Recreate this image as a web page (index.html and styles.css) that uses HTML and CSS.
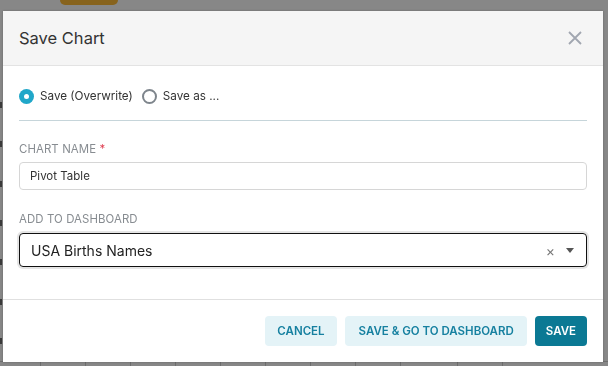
FILE: index.html
```html
<!DOCTYPE html>
<html>
<head>
<meta charset="utf-8">
<link rel="stylesheet" href="styles.css">
</head>
<body>
<div class="page">
  <div class="page-top">
    <span class="pill"></span>
  </div>
  <div class="page-rows">
    <div class="mark"></div><div class="mark"></div><div class="mark"></div><div class="mark"></div><div class="mark"></div><div class="mark"></div><div class="mark"></div>
  </div>
  <div class="page-table">
    <div class="cell c1"></div><div class="cell"></div><div class="cell"></div><div class="cell"></div><div class="cell"></div><div class="cell"></div><div class="cell"></div><div class="cell"></div><div class="cell"></div><div class="cell wide"></div><div class="cell"></div><div class="cell last"></div>
  </div>
</div>

<div class="modal">
  <div class="modal-header">
    <span class="modal-title">Save Chart</span>
    <svg class="close" width="14" height="14" viewBox="0 0 14 14"><path d="M1 1L13 13M13 1L1 13" stroke="#a1a6b0" stroke-width="1.8" fill="none"/></svg>
  </div>
  <div class="modal-body">
    <div class="radios">
      <label class="radio"><span class="dot checked"></span><span>Save (Overwrite)</span></label>
      <label class="radio"><span class="dot"></span><span>Save as ...</span></label>
    </div>
    <div class="divider"></div>
    <div class="field-label">CHART NAME <span class="req">*</span></div>
    <div class="input">Pivot Table</div>
    <div class="field-label second">ADD TO DASHBOARD</div>
    <div class="select">
      <span class="select-value">USA Births Names</span>
      <span class="clear">×</span>
      <span class="caret"></span>
    </div>
  </div>
  <div class="modal-footer">
    <button class="btn light">CANCEL</button>
    <button class="btn light wide">SAVE &amp; GO TO DASHBOARD</button>
    <button class="btn primary">SAVE</button>
  </div>
</div>
</body>
</html>
```
FILE: styles.css
```css
html, body {
  margin: 0;
  padding: 0;
}
body {
  width: 608px;
  height: 366px;
  overflow: hidden;
  background: #878787;
  font-family: Inter, "Noto Sans", sans-serif;
}
.page {
  height: 366px;
  display: flex;
  flex-direction: column;
}
.page-top {
  height: 5px;
  display: flex;
  align-items: flex-end;
}
.pill {
  margin-left: 60px;
  width: 58px;
  height: 5px;
  background: #87631d;
  border-radius: 0 0 8px 8px;
}
.page-rows {
  flex: 1;
  display: flex;
  flex-direction: column;
  justify-content: space-around;
  padding-top: 80px;
}
.mark {
  width: 2px;
  height: 6px;
  background: #3a3a3a;
}
.page-table {
  height: 4px;
  display: flex;
  border-top: 1px solid #6e6e6e;
}
.cell {
  width: 44px;
  border-left: 1px solid #6e6e6e;
  flex: none;
}
.cell.c1 {
  width: 40px;
  border-left: none;
}
.cell.wide {
  width: 56px;
}
.cell.last {
  width: 0;
}

.modal {
  position: fixed;
  left: 3px;
  top: 11px;
  width: 600px;
  height: 351px;
  background: #fff;
  display: flex;
  flex-direction: column;
  box-shadow: 0 0 2px rgba(0,0,0,0.25);
}
.modal-header {
  height: 55px;
  box-sizing: border-box;
  background: #f5f5f5;
  border-bottom: 1px solid #e3e3e3;
  display: flex;
  align-items: center;
  justify-content: space-between;
  padding: 0 21px 0 16px;
}
.modal-title {
  font-size: 16.5px;
  color: #333;
}
.close {
  display: block;
}
.modal-body {
  height: 233px;
  box-sizing: border-box;
  padding: 22px 16px 0;
}
.radios {
  display: flex;
  align-items: center;
  height: 16px;
}
.radio {
  display: flex;
  align-items: center;
  font-size: 11.7px;
  color: #333;
  margin-right: 9px;
}
.dot {
  width: 15px;
  height: 15px;
  box-sizing: border-box;
  border-radius: 50%;
  border: 2px solid #7e858c;
  margin-right: 6px;
  position: relative;
}
.dot.checked {
  border: none;
  background: #20a7c9;
}
.dot.checked::after {
  content: "";
  position: absolute;
  left: 5px;
  top: 5px;
  width: 5px;
  height: 5px;
  border-radius: 50%;
  background: #fff;
}
.divider {
  height: 1px;
  background: #c6d5da;
  margin: 16px 0 20px;
}
.field-label {
  font-size: 11.4px;
  color: #878c91;
  height: 16px;
  line-height: 16px;
  letter-spacing: 0.1px;
  margin-bottom: 5px;
}
.field-label.second {
  margin-top: 21px;
  margin-bottom: 6px;
}
.req {
  color: #e04355;
}
.input {
  height: 28px;
  box-sizing: border-box;
  border: 1px solid #d6d6d6;
  border-radius: 4px;
  padding: 0 10px;
  display: flex;
  align-items: center;
  font-size: 11.5px;
  color: #333;
}
.select {
  height: 34px;
  box-sizing: border-box;
  border: 1px solid #111;
  border-radius: 4px;
  box-shadow: 0 0 0 2px #e5e5e5;
  padding: 0 12px 0 11px;
  display: flex;
  align-items: center;
  font-size: 14px;
  color: #222;
}
.select-value {
  flex: 1;
}
.clear {
  color: #777;
  font-size: 14px;
  margin-right: 11px;
}
.caret {
  width: 0;
  height: 0;
  border-left: 4.5px solid transparent;
  border-right: 4.5px solid transparent;
  border-top: 5px solid #555;
}
.modal-footer {
  flex: 1;
  border-top: 1px solid #e0e0e0;
  display: flex;
  justify-content: flex-end;
  align-items: flex-start;
  gap: 8px;
  padding: 16px 16px 0;
}
.btn {
  height: 30px;
  border: none;
  border-radius: 4px;
  padding: 0 12px;
  font-family: Inter, "Noto Sans", sans-serif;
  font-size: 11.5px;
  font-weight: 600;
}
.btn.light {
  background: #e4f3f7;
  color: #1680a0;
}
.btn.light.wide {
  padding: 0 13px 0 14px;
}
.btn.primary {
  background: #0b7994;
  color: #fff;
  padding: 0 11px;
}
```
